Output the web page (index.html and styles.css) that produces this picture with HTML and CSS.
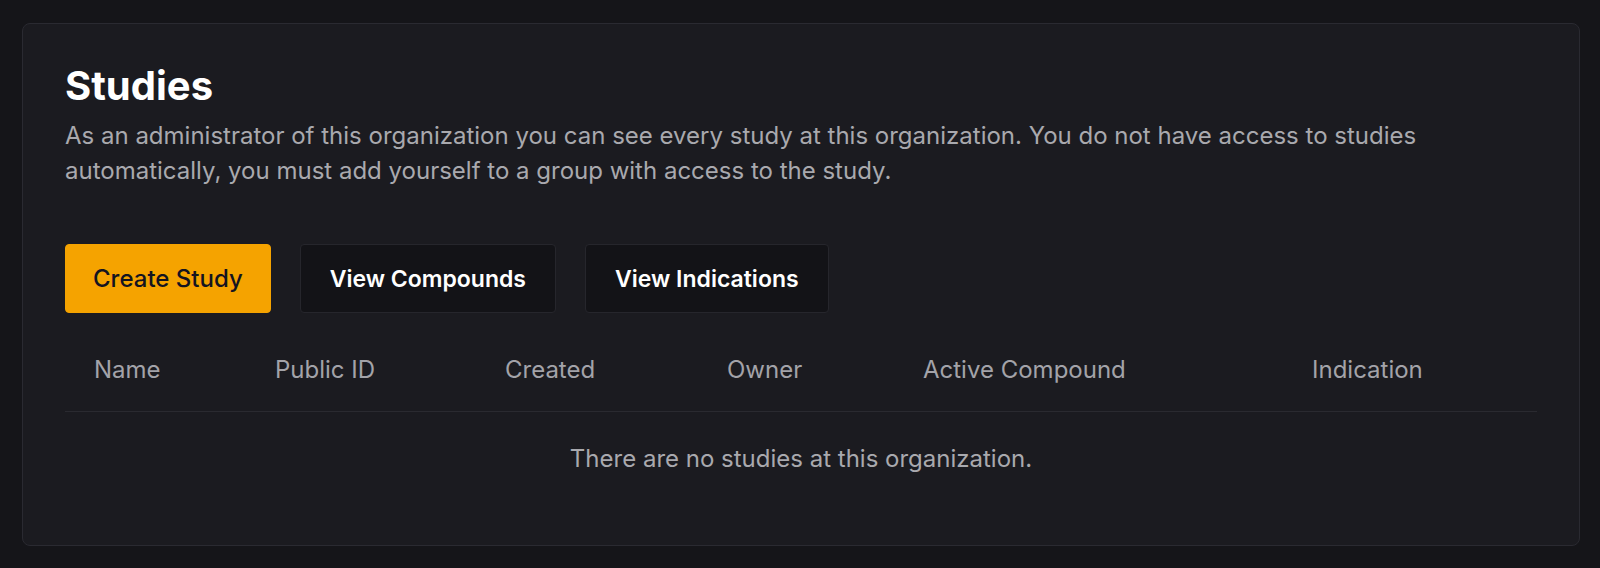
FILE: index.html
```html
<!DOCTYPE html>
<html>
<head>
  <title>Studies</title>
  <link rel="stylesheet" href="styles.css">
</head>
<body>
  <div class="card">
    <h1>Studies</h1>
    <p class="intro">As an administrator of this organization you can see every study at this organization. You do not have access to studies automatically, you must add yourself to a group with access to the study.</p>

    <div class="actions">
      <button type="button" class="btn btn-primary">Create Study</button>
      <button type="button" class="btn btn-dark">View Compounds</button>
      <button type="button" class="btn btn-dark">View Indications</button>
    </div>

    <table class="studies">
      <colgroup>
        <col class="col-name">
        <col class="col-id">
        <col class="col-created">
        <col class="col-owner">
        <col class="col-compound">
        <col class="col-indication">
      </colgroup>
      <thead>
        <tr>
          <th>Name</th>
          <th>Public ID</th>
          <th>Created</th>
          <th>Owner</th>
          <th>Active Compound</th>
          <th>Indication</th>
        </tr>
      </thead>
      <tbody>
        <tr>
          <td colspan="6" class="empty">There are no studies at this organization.</td>
        </tr>
      </tbody>
    </table>
  </div>
</body>
</html>
```

FILE: styles.css
```css
body {
  font-family: Inter, 'Noto Sans', sans-serif;
  margin: 0;
  padding: 23px 20px 22px 22px;
  background: #151519;
  min-height: 100vh;
  box-sizing: border-box;
}
.card {
  background-color: #1b1b20;
  border: 1px solid #2a2a31;
  border-radius: 8px;
  padding: 38px 42px 42px;
}
h1 {
  margin: 0;
  font-size: 40px;
  line-height: 48px;
  font-weight: 700;
  color: #ffffff;
}
.intro {
  margin: 8px 0 0;
  font-size: 24px;
  line-height: 35px;
  color: #a9a9ae;
}
.actions {
  display: flex;
  gap: 29px;
  margin-top: 56px;
}
.btn {
  height: 69px;
  padding: 0 29px;
  border-radius: 4px;
  font-family: inherit;
  cursor: pointer;
}
.btn-primary {
  padding: 0 27px;
  background-color: #f5a300;
  border: 1px solid #f5a300;
  color: #141420;
  font-size: 24px;
  font-weight: 500;
}
.btn-dark {
  background-color: #131317;
  border: 1px solid #26262c;
  color: #ffffff;
  font-size: 23px;
  font-weight: 600;
}
.studies {
  width: 100%;
  margin-top: 32px;
  border-collapse: collapse;
  table-layout: fixed;
}
.col-name { width: 181px; }
.col-id { width: 230px; }
.col-created { width: 222px; }
.col-owner { width: 196px; }
.col-compound { width: 389px; }
.studies th {
  text-align: left;
  padding: 13px 29px 29px;
  font-size: 24px;
  line-height: 24px;
  font-weight: 400;
  color: #a3a3a9;
  border-bottom: 1px solid #2a2a30;
}
.studies td.empty {
  text-align: center;
  padding: 35px 29px 32px;
  font-size: 24px;
  line-height: 24px;
  color: #a9a9ae;
}
```
